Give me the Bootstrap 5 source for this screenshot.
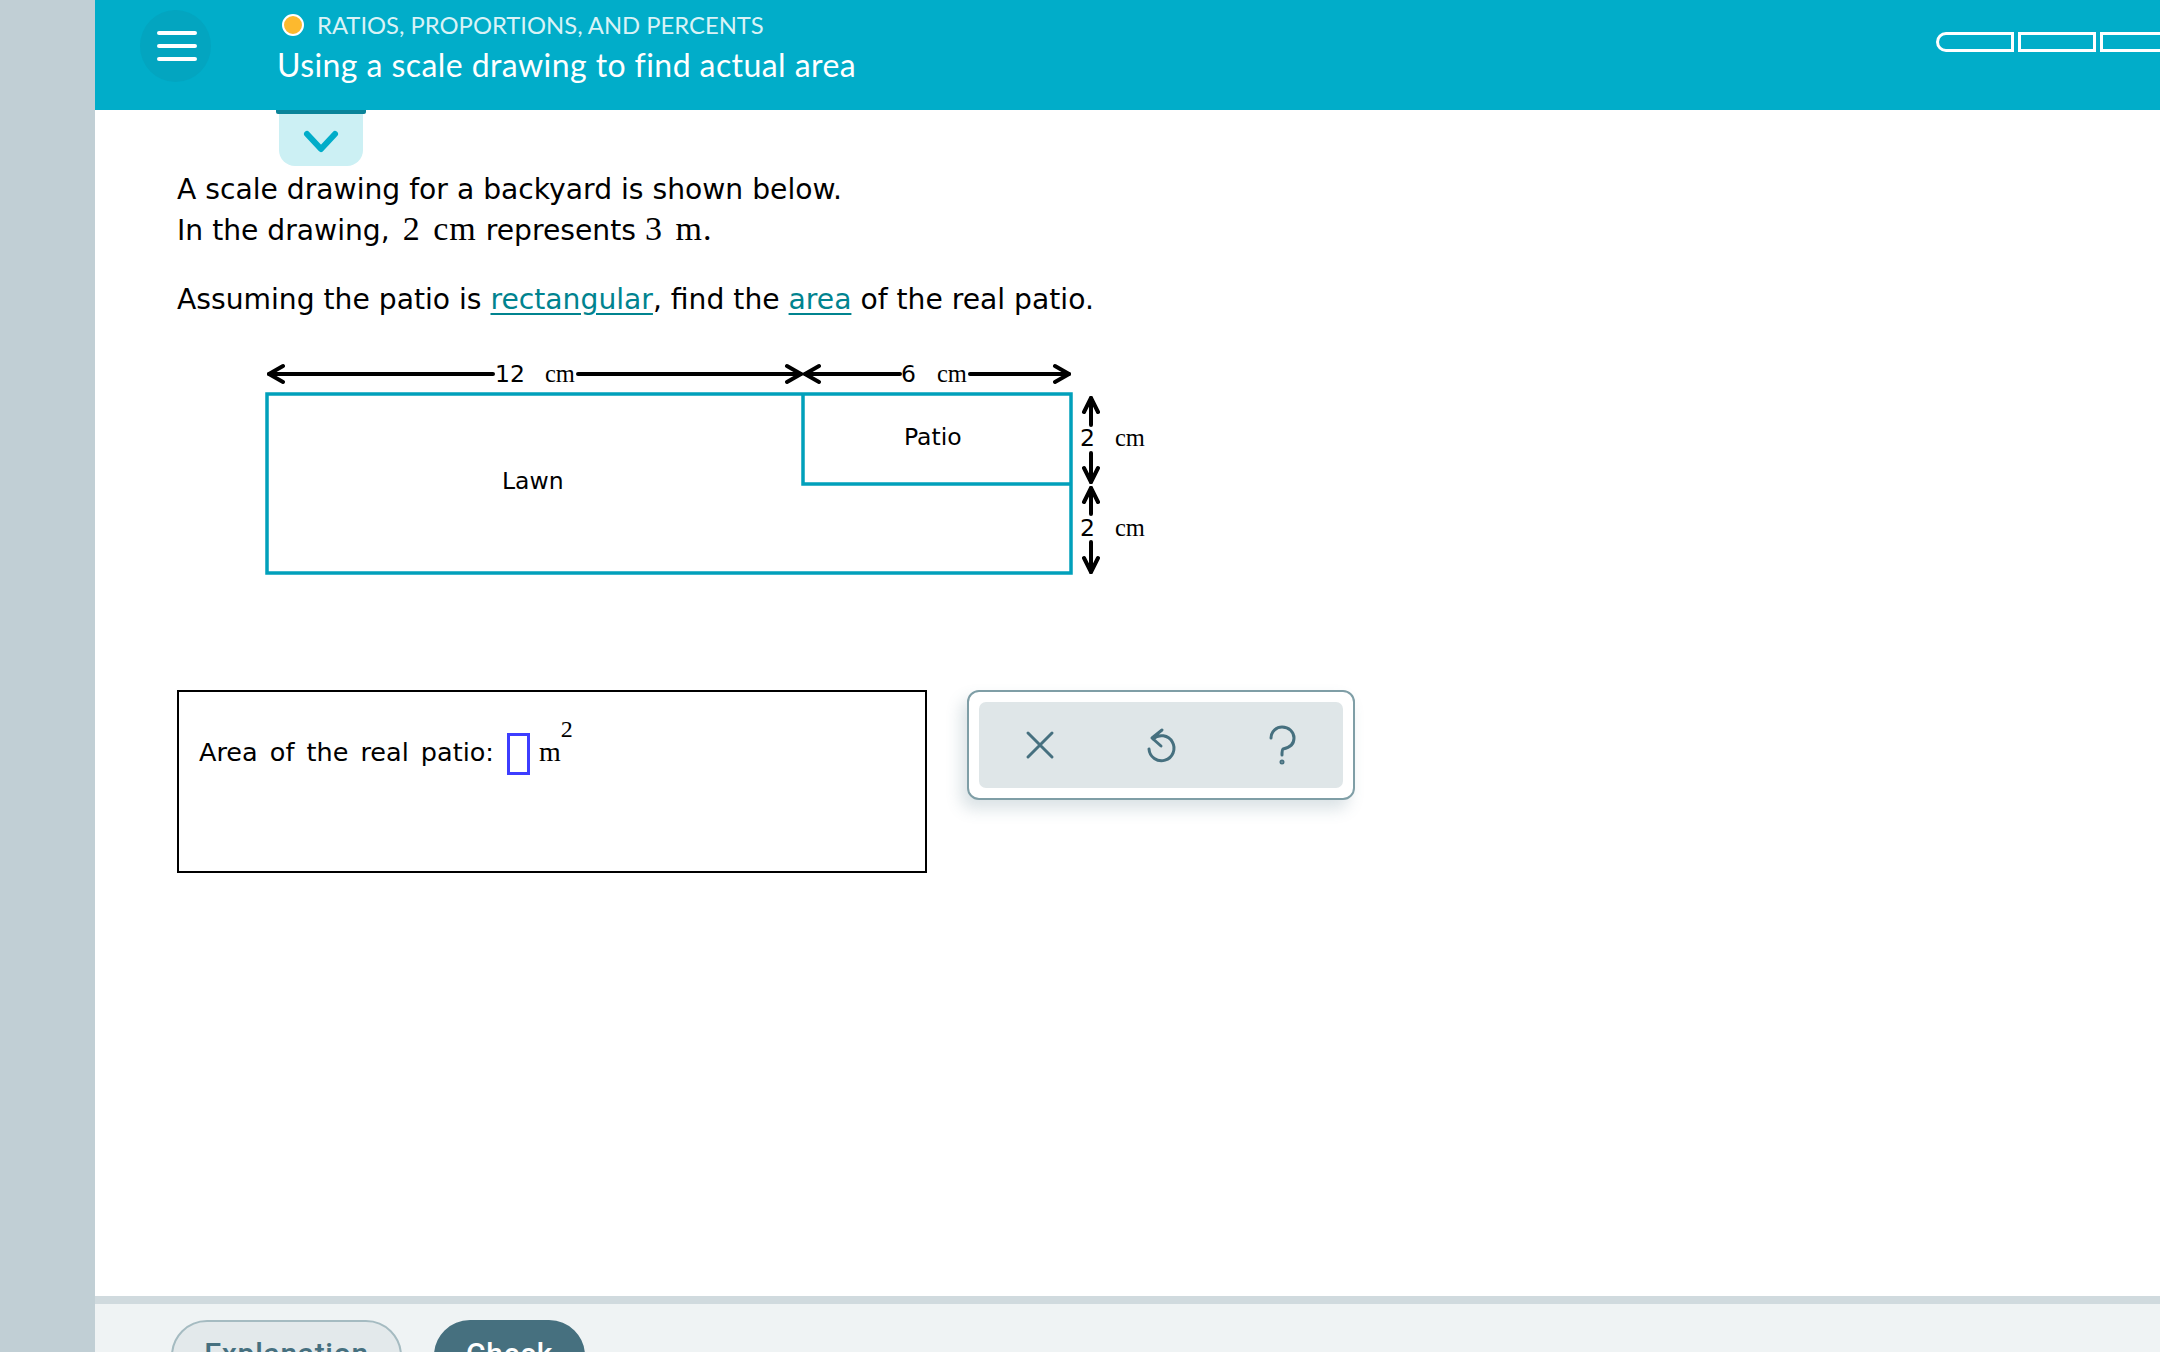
<!DOCTYPE html>
<html lang="en">
<head>
<meta charset="utf-8">
<title>Using a scale drawing to find actual area</title>
<link href="https://cdn.jsdelivr.net/npm/bootstrap@5.3.0/dist/css/bootstrap.min.css" rel="stylesheet">
<style>
html,body{height:1352px;overflow:hidden;background:#fff}
body{font-family:"DejaVu Sans",sans-serif;color:#000}
.rail{width:95px;background:#c1cfd5}
.topbar{height:110px;background:#01adc9;color:#fff;font-family:Lato,sans-serif}
.burger{width:71px;height:72px;left:45px;top:10px;background:#03a5c0;gap:9px;padding-left:2px}
.burger span{display:block;width:40px;height:4px;border-radius:2px;background:#fff}
.crumbs{left:182px;top:11px}
.dot-mark{width:22px;height:22px;background:#fdb92e;border:2px solid #fff;margin:0 13px 0 5px}
.crumb-text{font-size:23.8px;line-height:28px;color:#d9f3f7}
.lesson-title{font-size:32px;line-height:38px;margin-top:7px;letter-spacing:.42px}
.meter{right:0;top:32px;width:224px}
.meter i{display:block;flex:0 0 78px;height:20px;border:3px solid #fff}
.meter i:first-child{border-radius:10px 0 0 10px}
.meter i:last-child{flex:1 0 78px;margin-right:-20px}
.pull{left:181px;top:110px;width:90px}
.pull-top{height:4px;background:#0b8499;border-radius:0 0 2px 2px}
.pull-body{width:84px;height:52px;margin:0 auto;background:#ccf0f4;border-radius:0 0 16px 16px;padding-top:15px}
.workspace{padding:0 0 0 82px}
.prompt{font-size:28.2px;line-height:41px;padding-top:59px}
.prompt p{margin:0}
.prompt .gap{margin-top:28px}
.mth{font-family:"Liberation Serif",serif;font-size:34px;line-height:1;letter-spacing:.03em;word-spacing:3px}
.mth.lead-in{margin-left:4px}
.prompt a{color:#00838f;text-decoration:underline;text-underline-offset:4px}
.drawing{display:block;width:1000px;height:250px;margin-top:30px}
.drawing text{font-family:"DejaVu Sans",sans-serif;font-size:23.5px;fill:#000}
.drawing text.ser{font-family:"Liberation Serif",serif;font-size:24.5px}
.task{margin-top:90px;gap:40px}
.answer{width:750px;height:183px;border:2px solid #000;padding:41px 20px;font-size:25.5px;line-height:30px;word-spacing:4px}
.slot{width:23px;height:42px;border:3px solid #3d3dff;margin:0 9px 0 13px;vertical-align:middle}
.unit{font-family:"Liberation Serif",serif;font-size:28px;word-spacing:0}
.unit sup{font-size:24px;top:-24px;position:relative;vertical-align:baseline;line-height:0}
.tools{width:388px;height:110px;border:2px solid #7f9ea6;border-radius:12px;padding:10px;box-shadow:-6px 9px 16px rgba(70,112,127,.2);background:#fff}
.tools-in{background:#dfe6e8;border-radius:7px}
.tools-in svg{width:40px;height:40px;fill:none;stroke:#46707f;stroke-width:3;stroke-linecap:round;stroke-linejoin:round}
.dock{height:56px;background:#eff3f4;border-top:8px solid #d0dade;padding:16px 0 0 76px;gap:32px;overflow:hidden}
.dock .btn{border-radius:36px;font-family:Roboto,sans-serif;font-size:30px;font-weight:500;line-height:42px;padding:11px 0 40px;letter-spacing:.7px;align-self:flex-start}
.btn-expl{width:231px;background:#e3e9eb;border:2px solid #a5bbc1;color:#46707f}
.btn-chk{width:151px;background:#46707f;border:2px solid #46707f;color:#fff}
</style>
</head>
<body class="d-flex m-0">
<div class="rail flex-shrink-0"></div>
<div class="flex-grow-1 d-flex flex-column position-relative">
  <header class="topbar position-relative flex-shrink-0">
    <div class="burger position-absolute rounded-circle d-flex flex-column align-items-center justify-content-center">
      <span></span><span></span><span></span>
    </div>
    <div class="crumbs position-absolute">
      <div class="d-flex align-items-center"><span class="dot-mark rounded-circle"></span><span class="crumb-text">RATIOS, PROPORTIONS, AND PERCENTS</span></div>
      <div class="lesson-title">Using a scale drawing to find actual area</div>
    </div>
    <div class="meter position-absolute d-flex gap-1 overflow-hidden"><i></i><i></i><i></i></div>
  </header>
  <div class="pull position-absolute">
    <div class="pull-top"></div>
    <div class="pull-body text-center"><svg width="36" height="24" viewBox="0 0 36 24" fill="none" stroke="#01adc9" stroke-width="6" stroke-linecap="round" stroke-linejoin="round"><path d="M4 4 18 19 32 4"/></svg></div>
  </div>
  <main class="workspace flex-grow-1">
    <div class="prompt">
      <p>A scale drawing for a backyard is shown below.</p>
      <p>In the drawing, <span class="mth lead-in">2 cm</span> represents <span class="mth">3 m.</span></p>
      <p class="gap">Assuming the patio is <a href="#">rectangular</a>, find the <a href="#">area</a> of the real patio.</p>
    </div>
    <svg class="drawing" viewBox="0 0 1000 250" role="img" aria-label="Scale drawing of a backyard">
      <g fill="none" stroke="#01a0bb" stroke-width="3.5">
        <rect x="90" y="44" width="804" height="179"/>
        <path d="M626 44V134H894"/>
      </g>
      <g fill="none" stroke="#000" stroke-width="4" stroke-linejoin="round" stroke-linecap="round">
        <path d="M92 24H316M401 24H624M628 24H723M793 24H892"/>
        <path d="M106 16 92 24 106 32M610 16 624 24 610 32M642 16 628 24 642 32M878 16 892 24 878 32"/>
        <path d="M914 48V75M914 103V132M914 138V164M914 192V222"/>
        <path d="M907 62 914 48 921 62M907 118 914 132 921 118M907 152 914 138 921 152M907 208 914 222 921 208"/>
      </g>
      <text x="318" y="32">12</text><text class="ser" x="368" y="32">cm</text>
      <text x="724" y="32">6</text><text class="ser" x="760" y="32">cm</text>
      <text x="727" y="95">Patio</text>
      <text x="325" y="139">Lawn</text>
      <text x="903" y="96">2</text><text class="ser" x="938" y="96">cm</text>
      <text x="903" y="186">2</text><text class="ser" x="938" y="186">cm</text>
    </svg>
    <div class="task d-flex align-items-start">
      <div class="answer">Area of the real patio:<span class="slot d-inline-block"></span><span class="unit">m<sup>2</sup></span></div>
      <div class="tools">
        <div class="tools-in d-flex h-100 align-items-center">
          <div class="flex-fill text-center"><svg viewBox="0 0 40 40"><path d="M8 8 32 32M32 8 8 32"/></svg></div>
          <div class="flex-fill text-center"><svg viewBox="0 0 40 40"><path d="M12 14A12.5 12.5 0 1 1 8 24M21 5 11 13 20 21"/></svg></div>
          <div class="flex-fill text-center"><svg viewBox="0 0 40 40"><path d="M9 13C9 6 15 2 20 2 27 2 32 7 32 13 32 20 26 23 21 24 20 25 20 27 20 30"/><circle cx="20" cy="37" r="1" /></svg></div>
        </div>
      </div>
    </div>
  </main>
  <footer class="dock d-flex flex-shrink-0">
    <button type="button" class="btn btn-expl flex-shrink-0">Explanation</button>
    <button type="button" class="btn btn-chk flex-shrink-0">Check</button>
  </footer>
</div>
<script src="https://cdn.jsdelivr.net/npm/bootstrap@5.3.0/dist/js/bootstrap.bundle.min.js"></script>
</body>
</html>
